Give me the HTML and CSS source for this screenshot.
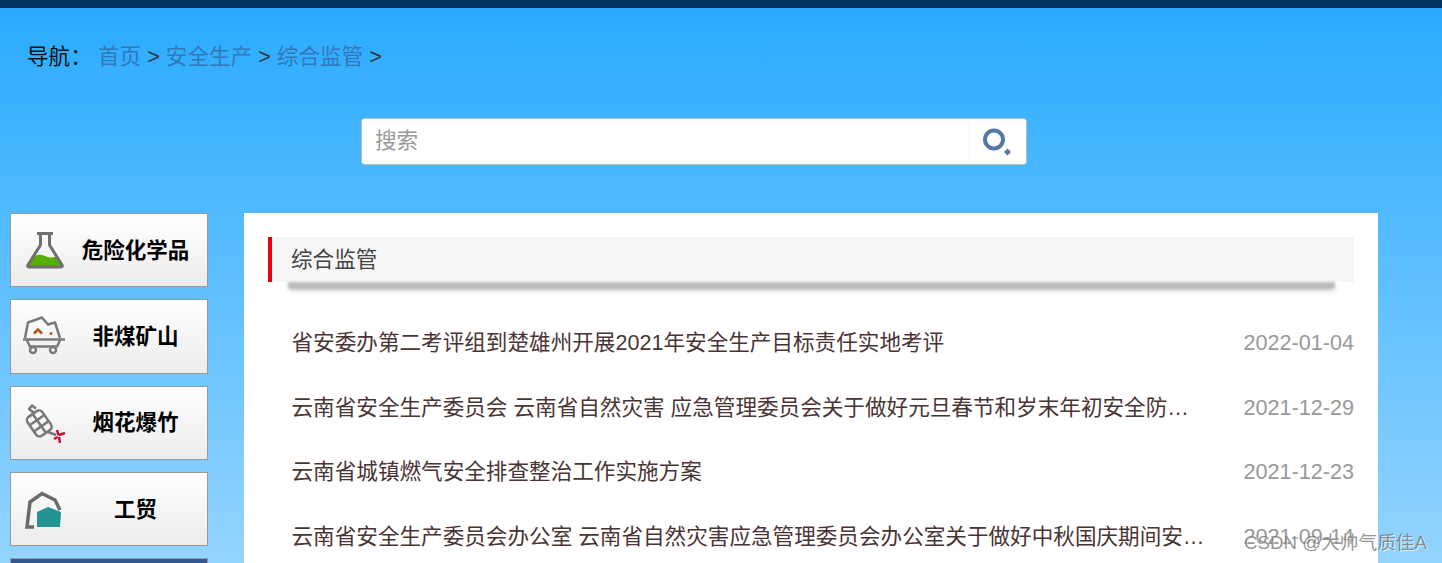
FILE: index.html
```html
<!DOCTYPE html>
<html lang="en">
<head>
  <meta charset="utf-8">
  <title>综合监管</title>
  <link rel="stylesheet" href="styles.css">
</head>
<body>
  <div class="top-bar"></div>

  <!-- 面包屑 -->
  <div class="crumbs">
    <span class="crumbs-label">导航：</span>
    <a href="javascript:;">首页</a> &gt;
    <a href="javascript:;">安全生产</a> &gt;
    <a href="javascript:;">综合监管</a> &gt;
  </div>

  <!-- 搜索 -->
  <div class="search">
    <input class="search-input" type="text" placeholder="搜索">
    <button class="search-btn" type="button" aria-label="搜索">
      <svg width="32" height="32" viewBox="0 0 32 32">
        <circle cx="11" cy="13.500" r="9" fill="none" stroke="#5578a8" stroke-width="4"/>
        <rect x="22" y="23.500" width="5" height="5" fill="#5578a8" transform="rotate(45 24.500 26)"/>
      </svg>
    </button>
  </div>

  <div class="main">
    <!-- 左侧菜单 -->
    <ul class="side">
      <li class="side-item">
        <svg class="side-icon" viewBox="0 0 48 48">
          <path d="M12 31q6-4 12-1t12 0l4 9q1 2-2 2H10q-3 0-2-2z" fill="#55b000"/>
          <path d="M16 7.500H32M19.500 7.500V19L7 39q-1 2 1.500 2h31q2.500 0 1.500-2L28.500 19V7.500" fill="none" stroke="#6f6f6f" stroke-width="3" stroke-linejoin="round"/>
        </svg>
        <span class="side-label">危险化学品</span>
      </li>
      <li class="side-item">
        <svg class="side-icon" viewBox="0 0 48 48">
          <path d="M4 26L7 10.500L21 5.500L27 12.500L34 10.500L39 26" fill="none" stroke="#7a7a7a" stroke-width="2.500" stroke-linejoin="round"/>
          <path d="M2 27.500H44M6 28.500L9 34.500H36L39 28.500" fill="none" stroke="#7a7a7a" stroke-width="2.500"/>
          <circle cx="12" cy="38" r="3" fill="none" stroke="#7a7a7a" stroke-width="2.500"/>
          <circle cx="32" cy="38" r="3" fill="none" stroke="#7a7a7a" stroke-width="2.500"/>
          <path d="M13 21.500L17 17.500L21 21.500" fill="none" stroke="#b0561c" stroke-width="2.500"/>
          <circle cx="30" cy="21.500" r="1.500" fill="#b0561c"/>
        </svg>
        <span class="side-label">非煤矿山</span>
      </li>
      <li class="side-item">
        <svg class="side-icon" viewBox="0 0 48 48">
          <g fill="none" stroke="#777" stroke-width="2.500" stroke-linejoin="round">
            <g transform="rotate(-35 18 24)">
              <rect x="9" y="13" width="18" height="23" rx="4"/>
              <path d="M18 13V36M9 20.500H27M9 28H27"/>
            </g>
            <path d="M13 14L8 10L11 6.500L15 9.500M27 33L35 36"/>
          </g>
          <path d="M36 31L37.500 36.500M38 38L39 44M38 36L44 34M36.500 38L33 40" fill="none" stroke="#c8102e" stroke-width="2.500"/>
        </svg>
        <span class="side-label">烟花爆竹</span>
      </li>
      <li class="side-item">
        <svg class="side-icon" viewBox="0 0 48 48">
          <path d="M13 42H6L9 17L21 8.500L34 15L39 25" fill="none" stroke="#6a6a6a" stroke-width="3.500"/>
          <path d="M16 42V27L27 22L40 27L39 42z" fill="#229492"/>
        </svg>
        <span class="side-label">工贸</span>
      </li>
      <li class="side-item active"></li>
    </ul>

    <!-- 内容 -->
    <div class="content">
      <div class="title"><span>综合监管</span></div>
      <ul class="news">
        <li class="news-row">
          <a class="news-text" href="javascript:;">省安委办第二考评组到楚雄州开展2021年安全生产目标责任实地考评</a>
          <span class="news-date">2022-01-04</span>
        </li>
        <li class="news-row">
          <a class="news-text" href="javascript:;">云南省安全生产委员会 云南省自然灾害 应急管理委员会关于做好元旦春节和岁末年初安全防范工作的通知</a>
          <span class="news-date">2021-12-29</span>
        </li>
        <li class="news-row">
          <a class="news-text" href="javascript:;">云南省城镇燃气安全排查整治工作实施方案</a>
          <span class="news-date">2021-12-23</span>
        </li>
        <li class="news-row">
          <a class="news-text" href="javascript:;">云南省安全生产委员会办公室 云南省自然灾害应急管理委员会办公室关于做好中秋国庆期间安全防范工作的通知</a>
          <span class="news-date">2021-09-14</span>
        </li>
      </ul>
    </div>
  </div>

  <div class="watermark">CSDN @大帅气质佳A</div>
</body>
</html>
```

FILE: styles.css
```css
* {
  margin: 0;
  padding: 0;
  box-sizing: border-box;
}
html, body {
  height: 563px;
  overflow: hidden;
}
body {
  position: relative;
  background: linear-gradient(#2aabff 8px, #94d4ff 563px);
  font-family: "Liberation Sans", "Noto Sans CJK SC", sans-serif;
  font-size: 21.600px;
  color: #333;
}
ul {
  list-style: none;
}
a {
  text-decoration: none;
}
.top-bar {
  height: 8px;
  background-color: #05345e;
}
.crumbs {
  height: 96px;
  padding: 34px 0 0 27px;
  line-height: 30px;
  white-space: nowrap;
}
.crumbs a {
  color: #3278b8;
}
.crumbs-label {
  display: inline-block;
  width: 65px;
  color: #111;
}
.search {
  display: flex;
  width: 666px;
  height: 47px;
  margin: 14px 0 0 361px;
  background-color: #fff;
  border: 1px solid #bbb;
  border-radius: 4px;
  overflow: hidden;
}
.search-input {
  flex: 1;
  min-width: 0;
  padding: 0 0 2px 13px;
  border: 0;
  outline: 0;
  font: inherit;
}
.search-input::placeholder {
  color: #999;
}
.search-btn {
  display: flex;
  align-items: center;
  width: 58px;
  padding-left: 14px;
  background-color: #fff;
  border: 0;
  border-left: 1px solid #fbfbfb;
}
.main {
  display: flex;
  align-items: flex-start;
  margin: 48px 0 0 10px;
}
.side {
  flex: none;
  width: 198px;
  margin-right: 36px;
}
.side-item {
  display: grid;
  grid-template-columns: 53px 1fr;
  align-items: center;
  height: 74.300px;
  margin-bottom: 12px;
  background: linear-gradient(#fff, #ececec);
  border: 1px solid #999;
}
.side-item.active {
  background: #33578f;
}
.side-icon {
  width: 48px;
  height: 48px;
  margin-left: 10px;
}
.side-label {
  padding-bottom: 4px;
  font-size: 21.500px;
  font-weight: bold;
  color: #000;
  text-align: center;
}
.content {
  width: 1134px;
  height: 600px;
  padding: 24px 24px 0;
  background-color: #fff;
}
.title {
  position: relative;
  height: 45px;
  padding-left: 19px;
  background-color: #f6f6f6;
  border-left: 4px solid #e60012;
  line-height: 45px;
  color: #444;
}
/* 标题下方的投影条 */
.title::after {
  content: "";
  position: absolute;
  left: 16px;
  right: 19px;
  top: 100%;
  height: 7px;
  background-color: #bdbdbd;
  border-radius: 0 0 3px 3px;
  box-shadow: 0 2px 4px rgba(0, 0, 0, 0.18);
  filter: blur(1px);
}
.news {
  padding-top: 29px;
}
.news-row {
  display: flex;
  justify-content: space-between;
  height: 64.500px;
  padding-left: 23.500px;
  line-height: 64.500px;
}
.news-text {
  width: 918px;
  overflow: hidden;
  white-space: nowrap;
  text-overflow: ellipsis;
  color: #4a3434;
}
.news-date {
  color: #999;
}
.watermark {
  position: absolute;
  right: 15px;
  bottom: 7px;
  font-size: 18.700px;
  line-height: 26px;
  color: rgba(120, 120, 120, 0.8);
  text-shadow: 1px 1px 0 rgba(255, 255, 255, 0.7);
}
```
